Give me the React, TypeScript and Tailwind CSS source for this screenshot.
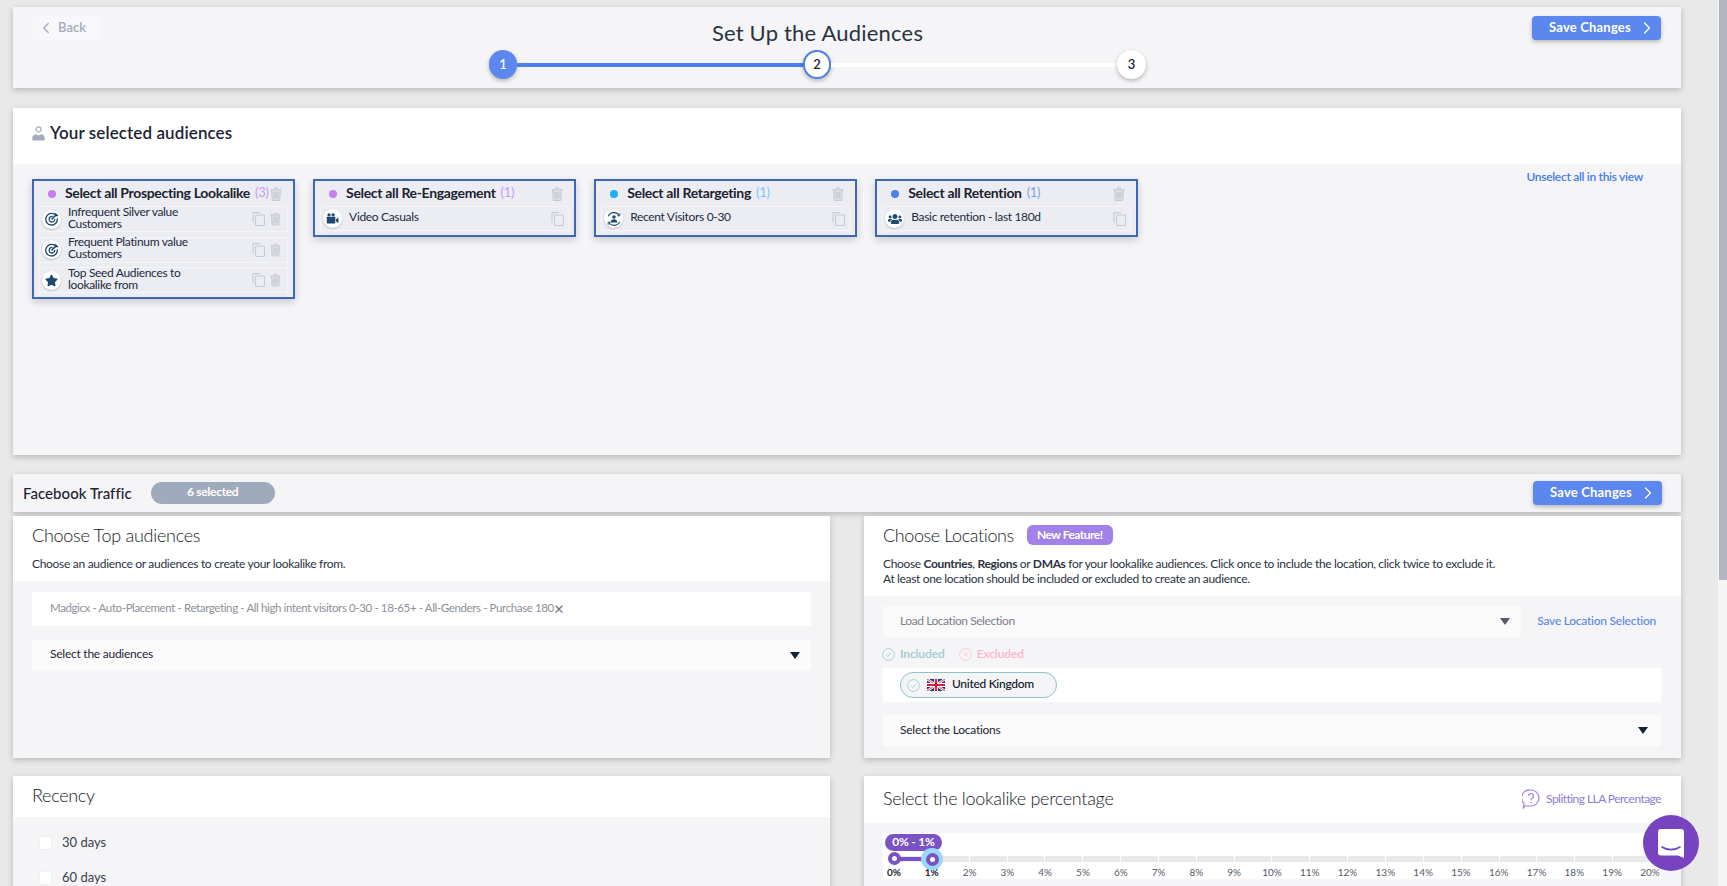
import React from "react";
import { ChevronLeft, ChevronRight } from "lucide-react";
import { FaStar, FaUsers } from "react-icons/fa";

const Trash = ({ c = "" }: { c?: string }) => (
  <svg viewBox="0 0 12 14" className={c} fill="none" stroke="#c9cbd3" strokeWidth="1">
    <path d="M0.5 2.5h11M4.5 2.2V.7h3v1.5" />
    <path d="M1.6 2.7l.7 10.8h7.4l.7-10.8z" fill="#dcdee3" />
    <path d="M4.2 5v6.5M6 5v6.5M7.8 5v6.5" stroke="#c0c2cb" strokeWidth=".8" />
  </svg>
);

const CopyI = ({ c = "" }: { c?: string }) => (
  <svg viewBox="0 0 13 14" className={c} fill="none" stroke="#c9cbd3" strokeWidth="1.1">
    <path d="M1 10.5V1.2a.6.6 0 0 1 .6-.6H8" />
    <rect x="3.5" y="3" width="9" height="10.5" rx="1" />
  </svg>
);

const Target = () => (
  <svg viewBox="0 0 14 14" className="w-[14px] h-[14px]" fill="none" stroke="#1d4a72" strokeWidth="1.3">
    <path d="M9.8 2.4A5.8 5.8 0 1 0 12.3 6.4" />
    <path d="M7.6 4.5A2.8 2.8 0 1 0 9.7 6.9" />
    <path d="M6.6 7.4L12 2" strokeWidth="1.5" />
    <path d="M10.3 .9v2.8h2.9" strokeWidth="1.2" />
  </svg>
);

const Retarget = () => (
  <svg viewBox="0 0 18 18" className="w-[16px] h-[16px]" fill="none" stroke="#1d4a72" strokeWidth="1.2">
    <path d="M2.5 6A7.2 7.2 0 0 1 15 5M15.5 12A7.2 7.2 0 0 1 3 13" />
    <path d="M15.6 2.4V5.4H12.6M2.4 15.6V12.6H5.4" strokeWidth="1" />
    <circle cx="9" cy="6.7" r="2" fill="#1d4a72" stroke="none" />
    <path d="M5.3 13c0-2.6 1.6-3.7 3.7-3.7s3.7 1.1 3.7 3.7z" fill="#1d4a72" stroke="none" />
  </svg>
);

const Video = () => (
  <svg viewBox="0 0 14 12" className="w-[13px] h-[11px]" fill="#1d4a72">
    <circle cx="3.2" cy="2" r="1.8" />
    <circle cx="7.6" cy="2" r="1.8" />
    <rect x="0.8" y="4" width="9.2" height="7.5" rx=".6" />
    <path d="M10.6 7l2.9-2.2v6.4L10.6 9z" />
  </svg>
);

const Person = () => (
  <svg viewBox="0 0 14 16" className="w-[13px] h-[15px]" fill="none" stroke="#a3acbd" strokeWidth="1.3">
    <circle cx="7" cy="3.6" r="2.7" />
    <path d="M1 15v-2.2c0-2.2 1.7-3.2 3.3-3.4L7 11l2.7-1.6c1.6.2 3.3 1.2 3.3 3.4V15z" fill="#a3acbd" />
  </svg>
);

const CheckCircle = ({ c = "" }: { c?: string }) => (
  <svg viewBox="0 0 14 14" className={c} fill="none" stroke="#9ccbce" strokeWidth=".9">
    <circle cx="7" cy="7" r="6.4" />
    <path d="M4.2 7.2l2 2 3.6-4" />
  </svg>
);

const XCircle = () => (
  <svg viewBox="0 0 14 14" className="w-[13px] h-[13px]" fill="none" stroke="#ffc0cd" strokeWidth=".9">
    <circle cx="7" cy="7" r="6.4" />
    <path d="M5 5l4 4M9 5l-4 4" />
  </svg>
);

const Flag = () => (
  <svg viewBox="0 0 18 12" className="w-[18px] h-[12px]">
    <rect width="18" height="12" fill="#25307a" />
    <path d="M0 0l18 12M18 0L0 12" stroke="#fff" strokeWidth="2.4" />
    <path d="M0 0l18 12M18 0L0 12" stroke="#cf1f3b" strokeWidth=".8" />
    <path d="M9 0v12M0 6h18" stroke="#fff" strokeWidth="4" />
    <path d="M9 0v12M0 6h18" stroke="#cf1f3b" strokeWidth="2.2" />
  </svg>
);

const Caret = ({ c }: { c: string }) => (
  <svg viewBox="0 0 10 7" className="w-[10px] h-[7px]">
    <path d="M0 0h10L5 7z" fill={c} />
  </svg>
);

const Step = ({ n, kind }: { n: number; kind: "done" | "active" | "todo" }) => (
  <div
    className={
      kind === "done"
        ? "w-[28px] h-[29px] shrink-0 rounded-full bg-[#5b87ee] text-white text-[13px] font-semibold flex items-center justify-center shadow-[0_2px_4px_rgba(0,0,0,0.25)]"
        : kind === "active"
        ? "w-[28px] h-[29px] shrink-0 rounded-full bg-white border-2 border-[#4f7fe8] text-[#1d2433] text-[13px] font-semibold flex items-center justify-center shadow-[0_2px_4px_rgba(0,0,0,0.25)]"
        : "w-[29px] h-[29px] shrink-0 rounded-full bg-white text-[#1d2433] text-[13px] font-semibold flex items-center justify-center shadow-[0_2px_4px_rgba(0,0,0,0.25)]"
    }
  >
    {n}
  </div>
);

const SaveBtn = () => (
  <div className="w-[129px] h-[24px] rounded-[4px] bg-[#5b87ee] text-white text-[13px] tracking-[0.2px] font-bold flex items-center pl-[17px] shadow-[0_2px_4px_rgba(0,0,0,0.25)]">
    <span>Save Changes</span>
    <ChevronRight className="w-[20px] h-[20px] ml-auto mr-[4px]" strokeWidth={1.5} />
  </div>
);

type Row = { label: string; icon: React.ReactNode };
const groups: { title: string; count: string; dot: string; countC: string; rows: Row[]; multi?: boolean }[] = [
  {
    title: "Select all Prospecting Lookalike",
    count: "(3)",
    dot: "bg-[#c780ee]",
    countC: "text-[#c99af0]",
    multi: true,
    rows: [
      { label: "Infrequent Silver value Customers", icon: <Target /> },
      { label: "Frequent Platinum value Customers", icon: <Target /> },
      { label: "Top Seed Audiences to lookalike from", icon: <FaStar className="w-[13px] h-[13px] text-[#1d4a72]" /> },
    ],
  },
  {
    title: "Select all Re-Engagement",
    count: "(1)",
    dot: "bg-[#c780ee]",
    countC: "text-[#c99af0]",
    rows: [{ label: "Video Casuals", icon: <Video /> }],
  },
  {
    title: "Select all Retargeting",
    count: "(1)",
    dot: "bg-[#1fb0f7]",
    countC: "text-[#7cc6f5]",
    rows: [{ label: "Recent Visitors 0-30", icon: <Retarget /> }],
  },
  {
    title: "Select all Retention",
    count: "(1)",
    dot: "bg-[#4f7fee]",
    countC: "text-[#7f9ff0]",
    rows: [{ label: "Basic retention - last 180d", icon: <FaUsers className="w-[14px] h-[14px] text-[#1d4a72]" /> }],
  },
];

const GroupCard = ({ g }: { g: (typeof groups)[number] }) => (
  <div className="w-[263px] border-2 border-[#3f66b8] bg-[#ecedf2] px-[5px] pb-[4px] self-start shadow-[0_3px_8px_rgba(0,0,0,0.18)]">
    <div className="h-[25px] flex items-center pl-[9px] pr-[6px]">
      <span className={`w-[8px] h-[8px] rounded-full shrink-0 ${g.dot}`} />
      <span className="ml-[9px] pb-[3px] text-[14px] tracking-[-0.33px] font-bold text-[#1b2230] whitespace-nowrap">{g.title}</span>
      <span className={`ml-[5px] pb-[2px] text-[13px] tracking-[-0.3px] ${g.countC}`}>{g.count}</span>
      <Trash c="w-[12px] h-[14px] ml-auto shrink-0" />
    </div>
    <div className={g.multi ? "flex flex-col gap-[4.5px]" : "flex flex-col"}>
      {g.rows.map((r) => (
        <div key={r.label} className={`${g.multi ? "h-[26px] pr-[6px]" : "h-[25px] pr-[4px]"} border border-[#f5f5f8] flex items-center pl-[2px]`}>
          <span className="w-[19px] h-[19px] rounded-full bg-white shrink-0 flex items-center justify-center shadow-[0_1px_2px_rgba(0,0,0,0.2)]">
            {r.icon}
          </span>
          <span className="ml-[7px] pb-[3px] text-[12px] tracking-[-0.33px] leading-[12px] text-[#1d2a3e] w-[135px]">{r.label}</span>
          <CopyI c="w-[13px] h-[14px] ml-auto shrink-0" />
          {g.multi && <Trash c="w-[11px] h-[14px] ml-[5px] shrink-0" />}
        </div>
      ))}
    </div>
  </div>
);

const Panel = ({ children, className = "" }: { children: React.ReactNode; className?: string }) => (
  <div className={`bg-[#f5f5f7] shadow-[0_2px_6px_rgba(0,0,0,0.22)] ${className}`}>{children}</div>
);

const pct = Array.from({ length: 21 }, (_, i) => i);

export default function App() {
  return (
    <div className="relative flex w-[1727px] h-[886px] overflow-hidden bg-[#e9e9e9] [font-family:Lato,sans-serif] text-[#1d2433]">
      <main className="flex-1 pl-[13px] pt-[7px]">
        <div className="w-[1668px]">
          {/* top bar */}
          <Panel className="h-[81px] flex items-start pl-[20px] pt-[9px] pr-[20px]">
            <div className="w-[68px] h-[24px] bg-[#f8f8fa] flex items-center pl-[4px] gap-[3px] text-[#a3acbd] text-[13px] font-semibold">
              <ChevronLeft className="w-[18px] h-[18px]" strokeWidth={1.8} />
              Back
            </div>
            <div className="ml-[388px] w-[657px] flex flex-col">
              <div className="h-[34px] text-center text-[22px] tracking-[0.2px] leading-[34px] text-[#2b3240]">Set Up the Audiences</div>
              <div className="flex items-center">
                <Step n={1} kind="done" />
                <div className="flex-1 h-[4px] bg-[#4f7fe8]" />
                <Step n={2} kind="active" />
                <div className="flex-1 h-[4px] bg-white" />
                <Step n={3} kind="todo" />
              </div>
            </div>
            <div className="ml-auto">
              <SaveBtn />
            </div>
          </Panel>

          {/* selected audiences */}
          <Panel className="mt-[20px] h-[347px]">
            <div className="h-[56px] pb-[6px] bg-white flex items-center pl-[19px] gap-[5px]">
              <Person />
              <span className="text-[17px] tracking-[0.1px] font-semibold text-[#1d2433]">Your selected audiences</span>
            </div>
            <div className="flex pl-[19px] pr-[38px] pt-[15px]">
              <div className="flex gap-[18.1px]">
                {groups.map((g) => (
                  <GroupCard key={g.title} g={g} />
                ))}
              </div>
              <span className="ml-auto -mt-[11px] text-[12px] tracking-[-0.3px] font-semibold text-[#3f7cf0]">Unselect all in this view</span>
            </div>
          </Panel>

          {/* facebook bar */}
          <Panel className="mt-[19px] h-[38px] flex items-center pl-[10px] pr-[19px]">
            <span className="text-[15px] font-medium tracking-[0.05px]">Facebook Traffic</span>
            <span className="ml-[19px] w-[124px] h-[22px] pb-[3px] rounded-full bg-[#a0aabd] text-white text-[12px] tracking-[-0.3px] font-bold flex items-center justify-center">
              6 selected
            </span>
            <div className="ml-auto">
              <SaveBtn />
            </div>
          </Panel>

          <div className="mt-[4px] grid grid-cols-[817px_817px] gap-x-[34px] gap-y-[18px]">
            {/* top audiences */}
            <Panel className="h-[242px]">
              <div className="h-[65px] bg-white pl-[19px] pt-[7px]">
                <div className="text-[18px] tracking-[-0.28px] leading-[24px] text-[#141a26] font-light">Choose Top audiences</div>
                <div className="mt-[9px] text-[12px] tracking-[-0.3px] leading-[16px] text-[#2b3240]">Choose an audience or audiences to create your lookalike from.</div>
              </div>
              <div className="px-[19px] pt-[11px]">
                <div className="h-[34px] pb-[2px] bg-white flex items-center pl-[18px] text-[11.5px] tracking-[-0.38px] text-[#8d9097]">
                  Madgicx - Auto-Placement - Retargeting - All high intent visitors 0-30 - 18-65+ - All-Genders - Purchase 180
                  <span className="text-[17px] leading-none text-[#6b6f78]">×</span>
                </div>
                <div className="mt-[14px] h-[30px] pb-[2px] bg-[#fbfbfc] flex items-center pl-[18px] pr-[11px] text-[12px] tracking-[-0.25px] text-[#1d2433]">
                  Select the audiences
                  <span className="ml-auto pt-[2px]">
                    <Caret c="#14213a" />
                  </span>
                </div>
              </div>
            </Panel>

            {/* locations */}
            <Panel className="h-[242px]">
              <div className="h-[80px] bg-white pl-[19px] pt-[7px]">
                <div className="flex items-center h-[24px]">
                  <span className="text-[18px] tracking-[-0.4px] text-[#141a26] font-light">Choose Locations</span>
                  <span className="ml-[13px] w-[86px] h-[20px] pb-[1px] rounded-[6px] bg-[#a281e8] text-white text-[12px] tracking-[-0.5px] font-bold flex items-center justify-center">New Feature!</span>
                </div>
                <div className="mt-[9px] text-[12px] tracking-[-0.34px] leading-[15px] text-[#2b3240]">
                  Choose <b>Countries</b>, <b>Regions</b> or <b>DMAs</b> for your lookalike audiences. Click once to include the location, click twice to exclude it.
                  <br />
                  At least one location should be included or excluded to create an audience.
                </div>
              </div>
              <div className="pl-[19px] pr-[20px] pt-[10px]">
                <div className="flex items-center">
                  <div className="w-[638px] h-[31px] pb-[2px] bg-[#fafafb] flex items-center pl-[17px] pr-[11px] text-[12px] tracking-[-0.43px] text-[#7d818a]">
                    Load Location Selection
                    <span className="ml-auto pt-[2px]">
                      <Caret c="#555b6b" />
                    </span>
                  </div>
                  <span className="ml-auto mr-[5px] pb-[2px] text-[12px] tracking-[-0.25px] font-medium text-[#5b87ee]">Save Location Selection</span>
                </div>
                <div className="mt-[11px] h-[13px] flex items-center text-[12px] tracking-[-0.1px] font-semibold">
                  <CheckCircle c="w-[13px] h-[13px] -ml-[1px]" />
                  <span className="ml-[5px] pb-[2px] text-[#9ccbce]">Included</span>
                  <span className="ml-[14px]"><XCircle /></span>
                  <span className="ml-[5px] pb-[2px] text-[#ffb3c6]">Excluded</span>
                </div>
                <div className="mt-[7px] h-[34px] bg-white flex items-center pl-[17px]">
                  <div className="w-[157px] h-[26px] rounded-full border border-[#8fc3c7] bg-[#f5f5f7] flex items-center pl-[6px] text-[12px] tracking-[-0.3px] font-medium text-[#10151f]">
                    <CheckCircle c="w-[13px] h-[13px]" />
                    <span className="ml-[7px]"><Flag /></span>
                    <span className="ml-[7px] pb-[2px]">United Kingdom</span>
                  </div>
                </div>
                <div className="mt-[13px] h-[31px] pb-[2px] bg-[#fbfbfc] flex items-center pl-[17px] pr-[13px] text-[12px] tracking-[-0.25px]">
                  Select the Locations
                  <span className="ml-auto pt-[2px]">
                    <Caret c="#14213a" />
                  </span>
                </div>
              </div>
            </Panel>

            {/* recency */}
            <Panel className="h-[200px]">
              <div className="h-[41px] pb-[2px] bg-white pl-[19px] flex items-center text-[18px] tracking-[-0.3px] text-[#141a26] font-light">Recency</div>
              <div className="pl-[26px] pt-[19px] flex flex-col gap-[21px] text-[13px] text-[#3a404d]">
                {["30 days", "60 days"].map((d) => (
                  <label key={d} className="flex items-center h-[14px]">
                    <span className="w-[13px] h-[14px] bg-white rounded-[2px] border border-[#f0f0f3]" />
                    <span className="ml-[10px]">{d}</span>
                  </label>
                ))}
              </div>
            </Panel>

            {/* percentage */}
            <Panel className="h-[200px]">
              <div className="h-[47px] pb-[2px] bg-white pl-[19px] pr-[20px] flex items-center">
                <span className="text-[18px] tracking-[-0.3px] text-[#141a26] font-light">Select the lookalike percentage</span>
                <svg viewBox="0 0 18 20" className="ml-auto w-[18px] h-[20px]" fill="none" stroke="#a281e8" strokeWidth="1.2">
                  <path d="M9 1a8 8 0 0 1 0 16H3l-1.5 2 .5-4.5A8 8 0 0 1 9 1z" />
                  <path d="M6.5 7a2.5 2.5 0 1 1 3.7 2.2c-.9.5-1.2 1-1.2 2M9 13v1.2" />
                </svg>
                <span className="ml-[6px] text-[12px] tracking-[-0.55px] text-[#8f7ad8]">Splitting LLA Percentage</span>
              </div>
              <div className="mx-[19px] mt-[10px] mr-[20px] h-[46px] bg-white rounded-[3px] px-[11px] pt-[1px]">
                <div className="-ml-[9px] w-[57px] h-[17px] pb-[1px] rounded-[9px] bg-[#7a52c4] text-white text-[12px] tracking-[-0.2px] font-bold flex items-center justify-center">0% - 1%</div>
                <div className="relative mt-[5px] h-[6px] flex gap-[1px]">
                  {pct.slice(0, 20).map((i) => (
                    <div key={i} className="flex-1 bg-[#e9e9e9]" />
                  ))}
                  <div className="absolute left-0 top-[1px] w-[38px] h-[4px] bg-[#7a52c4]" />
                  <div className="absolute -left-[6px] -top-[4px] w-[13px] h-[13px] rounded-full border-[4px] border-[#7a52c4] bg-white" />
                  <div className="absolute left-[27px] -top-[8px] w-[22px] h-[22px] rounded-full bg-[#9ad8fb] flex items-center justify-center">
                    <div className="w-[13px] h-[13px] rounded-full border-[4px] border-[#7a52c4] bg-white" />
                  </div>
                </div>
                <div className="mt-[4px] flex justify-between text-[10px] leading-[12px]">
                  {pct.map((i) => (
                    <span key={i} className={`w-0 flex justify-center whitespace-nowrap ${i < 2 ? "text-[#1d2433] font-bold" : "text-[#555b6b]"}`}>
                      {i}%
                    </span>
                  ))}
                </div>
              </div>
            </Panel>
          </div>
        </div>
      </main>

      {/* scrollbar */}
      <div className="w-[9px] h-full bg-[#f5f5f5] flex justify-end">
        <div className="w-[8px] h-[580px] bg-[#b3b6c0]" />
      </div>

      {/* chat bubble */}
      <div className="absolute left-[1643px] top-[815px] w-[56px] h-[56px] rounded-full bg-[#7743c1] flex items-center justify-center">
        <svg viewBox="0 0 26 29" className="w-[26px] h-[29px]">
          <path d="M3 0h20a3 3 0 0 1 3 3v26l-6-2.5H3a3 3 0 0 1-3-3V3a3 3 0 0 1 3-3z" fill="#fff" />
          <path d="M4 18c5 3.5 13 3.5 18 0" fill="none" stroke="#7743c1" strokeWidth="1.6" strokeLinecap="round" />
        </svg>
      </div>
    </div>
  );
}
